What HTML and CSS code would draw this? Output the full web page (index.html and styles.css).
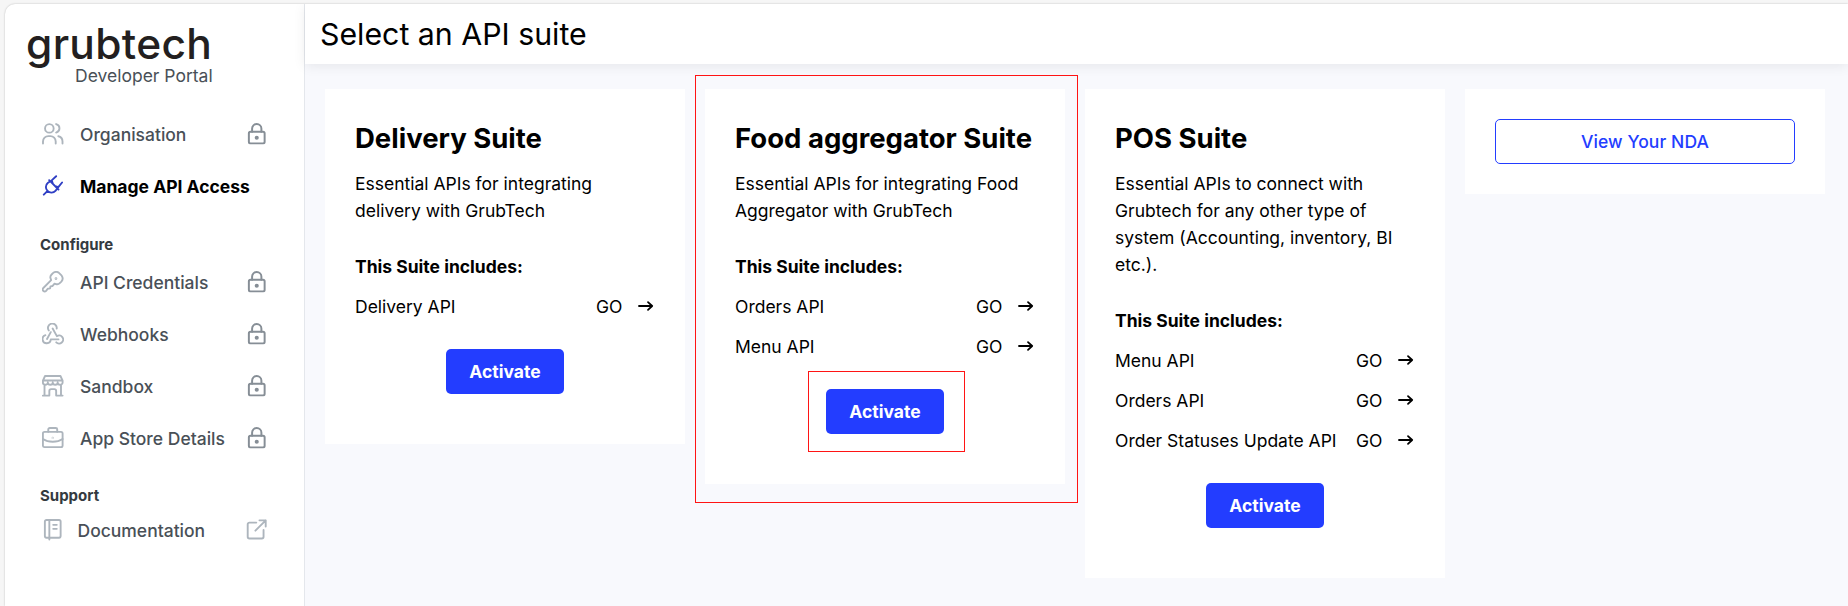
FILE: index.html
```html
<!DOCTYPE html>
<html lang="en">
<head>
  <meta charset="UTF-8" />
  <title>Grubtech Developer Portal</title>
  <link rel="stylesheet" href="styles.css">
</head>
<body>

  <!-- shared icons -->
  <svg class="sprite" xmlns="http://www.w3.org/2000/svg">
    <symbol id="lock" viewBox="0 0 24 24">
      <rect x="3.2" y="9.8" width="17.6" height="13" rx="1.8" />
      <path d="M6.8 9.8V6.300a5.2 5.2 0 0 1 10.4 0v3.5" />
      <circle cx="12" cy="16.4" r="1.2" />
    </symbol>
    <symbol id="arrow" viewBox="0 0 16 12">
      <path d="M1 6h13M10 2.200l4.200 3.800L10 9.800" />
    </symbol>
  </svg>

  <div class="frame">
    <aside class="sidebar">
      <div class="brand">
        <div class="logo">grubtech</div>
        <div class="brand-sub">Developer Portal</div>
      </div>

      <nav class="nav">
        <a class="nav-item">
          <svg class="icon" viewBox="0 0 24 24">
            <circle cx="8.200" cy="6" r="4.800" />
            <path d="M1.100 23v-2.400a6 6 0 0 1 6-6h2.200a6 6 0 0 1 6 6V23M15.800 1.200a4.900 4.900 0 0 1 0 9.500M18.200 14.800a6 6 0 0 1 4.700 5.800V23" />
          </svg>
          <span class="nav-label">Organisation</span>
          <svg class="icon lock"><use href="#lock" /></svg>
        </a>
        <a class="nav-item active">
          <svg class="icon" viewBox="0 0 24 24">
            <path d="M2 22l4.200-4.200M8 5.800l10.400 10.400M9.200 7L6.400 9a5.900 5.900 0 0 0-.2 8.800 5.900 5.900 0 0 0 8.800-.2l2.200-2.600M12 9.400L10.800 6l5-4.600M14.800 12.400l3.400 1.200 4.200-5.200" />
          </svg>
          <span class="nav-label">Manage API Access</span>
        </a>
      </nav>

      <h3 class="nav-title">Configure</h3>
      <nav class="nav">
        <a class="nav-item">
          <svg class="icon" viewBox="0 0 24 24">
            <path d="M12.200 2.400a5.600 5.600 0 0 1 6.400-.6l3.400 3.400a5.400 5.400 0 0 1-.4 6.600l-1.800 1.800a4 4 0 0 1-4.200 1l-1.600-.5-2.400 2.700-2.100.3-.5 2.300-2.600.4-1.800 2.400a2.200 2.200 0 0 1-3.100-3.200L10.200 10.200l-.6-1.800a4 4 0 0 1 .9-4.200z" />
            <circle cx="15.600" cy="8.400" r=".5" />
          </svg>
          <span class="nav-label">API Credentials</span>
          <svg class="icon lock"><use href="#lock" /></svg>
        </a>
        <a class="nav-item">
          <svg class="icon" viewBox="0 0 24 24">
            <path d="M7.600 8.400a4.900 4.900 0 1 1 8.800-2.100M11.900 6.200l4.700 8.500a4.500 4.500 0 1 1-.7 6.900M9.800 10.200l-4.200 7.600M3.800 13.600a4.600 4.600 0 1 0 6 4.700h8.600" />
          </svg>
          <span class="nav-label">Webhooks</span>
          <svg class="icon lock"><use href="#lock" /></svg>
        </a>
        <a class="nav-item">
          <svg class="icon" viewBox="0 0 24 24">
            <path d="M3.400 1.100h17.200L23 6.200H1zM1 6.200v2.200a2.750 2.500 0 0 0 5.500 0 2.750 2.500 0 0 0 5.500 0 2.750 2.500 0 0 0 5.500 0 2.750 2.500 0 0 0 5.500 0V6.200M2.800 11.400V23M21.200 11.400V23M1 23h7.200v-5.200a2 2 0 0 1 2-2h3.600a2 2 0 0 1 2 2V23H23" />
          </svg>
          <span class="nav-label">Sandbox</span>
          <svg class="icon lock"><use href="#lock" /></svg>
        </a>
        <a class="nav-item">
          <svg class="icon" viewBox="0 0 24 24">
            <rect x="1" y="5.400" width="22" height="17" rx="1.800" />
            <path d="M7 5.400V2.800a1.700 1.700 0 0 1 1.700-1.700h6.600A1.700 1.700 0 0 1 17 2.800v2.600M1 13.400c3 2 7 3 11 3s8-1 11-3" />
            <circle cx="12" cy="12.200" r=".2" />
          </svg>
          <span class="nav-label">App Store Details</span>
          <svg class="icon lock"><use href="#lock" /></svg>
        </a>
      </nav>

      <h3 class="nav-title support">Support</h3>
      <nav class="nav">
        <a class="nav-item docs">
          <svg class="icon" viewBox="0 0 24 24">
            <rect x="3.200" y="1.100" width="17.600" height="19.800" rx="1.800" />
            <path d="M8.200 1.100V23M12.500 6.500h4M12.500 11h4" />
          </svg>
          <span class="nav-label">Documentation</span>
          <svg class="icon external" viewBox="0 0 24 24">
            <path d="M11.500 4H3.800A1.900 1.900 0 0 0 1.900 5.900v13.900a1.900 1.900 0 0 0 1.900 1.900h13.900a1.900 1.900 0 0 0 1.900-1.900v-7.500M10.500 13L22 1.500M15 1.500h7v7" />
          </svg>
        </a>
      </nav>
    </aside>

    <main class="main">
      <header class="header">
        <h1>Select an API suite</h1>
      </header>

      <section class="cards">
        <div class="card">
          <h2>Delivery Suite</h2>
          <p class="desc">Essential APIs for integrating delivery with GrubTech</p>
          <h4>This Suite includes:</h4>
          <ul class="api-list">
            <li><span>Delivery API</span><a class="go">GO <svg class="arrow"><use href="#arrow" /></svg></a></li>
          </ul>
          <button class="btn">Activate</button>
        </div>

        <div class="card highlighted">
          <h2>Food aggregator Suite</h2>
          <p class="desc">Essential APIs for integrating Food Aggregator with GrubTech</p>
          <h4>This Suite includes:</h4>
          <ul class="api-list">
            <li><span>Orders API</span><a class="go">GO <svg class="arrow"><use href="#arrow" /></svg></a></li>
            <li><span>Menu API</span><a class="go">GO <svg class="arrow"><use href="#arrow" /></svg></a></li>
          </ul>
          <button class="btn marked">Activate</button>
        </div>

        <div class="card">
          <h2>POS Suite</h2>
          <p class="desc">Essential APIs to connect with Grubtech for any other type of system (Accounting, inventory, BI etc.).</p>
          <h4>This Suite includes:</h4>
          <ul class="api-list">
            <li><span>Menu API</span><a class="go">GO <svg class="arrow"><use href="#arrow" /></svg></a></li>
            <li><span>Orders API</span><a class="go">GO <svg class="arrow"><use href="#arrow" /></svg></a></li>
            <li><span>Order Statuses Update API</span><a class="go">GO <svg class="arrow"><use href="#arrow" /></svg></a></li>
          </ul>
          <button class="btn">Activate</button>
        </div>

        <div class="card nda">
          <button class="btn-outline">View Your NDA</button>
        </div>
      </section>
    </main>
  </div>

</body>
</html>
```
FILE: styles.css
```css
* {
  box-sizing: border-box;
  margin: 0;
  padding: 0;
}
body {
  font-family: Inter, "Liberation Sans", sans-serif;
  font-size: 17.5px;
  background: #f6f6f6;
  color: #000;
  height: 606px;
  padding: 4px 0 0 5px;
  overflow: hidden;
}
.sprite {
  display: none;
}
.frame {
  display: flex;
  height: 602px;
  background: #fff;
  border-top-left-radius: 10px;
  box-shadow: 0 0 2px rgba(0,0,0,0.25);
  overflow: hidden;
}

/* sidebar */
.sidebar {
  width: 300px;
  flex-shrink: 0;
  border-right: 1px solid #e4e7ec;
}
.brand {
  height: 104px;
  padding: 19px 0 0 21px;
}
.logo {
  font-size: 42.5px;
  font-weight: 500;
  line-height: 41px;
  letter-spacing: 0.3px;
  color: #231f20;
}
.brand-sub {
  padding-left: 49px;
  line-height: 24px;
  color: #495057;
}
.nav-item {
  display: flex;
  align-items: center;
  height: 52px;
  padding: 0 37px 0 37px;
  font-weight: 500;
  color: #495057;
}
.nav-item.active {
  color: #000;
  font-weight: 700;
}
.icon {
  width: 21.5px;
  height: 21.5px;
  flex-shrink: 0;
  margin-right: 16.5px;
  fill: none;
  stroke: #adb5bd;
  stroke-width: 2.1;
  stroke-linecap: round;
  stroke-linejoin: round;
}
.active .icon {
  stroke: #2f3fc4;
}
.nav-label {
  flex: 1;
  white-space: nowrap;
}
.icon.lock,
.icon.external {
  margin-right: 0;
}
.icon.lock {
  stroke: #868e96;
  stroke-width: 2.2;
}
.nav-title {
  padding: 23px 0 0 35px;
  height: 44px;
  line-height: 20px;
  font-size: 15px;
  font-weight: 700;
  color: #343a40;
}
.nav-title.support {
  padding-top: 22px;
  height: 40px;
}
.docs .icon {
  margin-right: 14px;
}
.docs .icon.external {
  margin-right: 0;
}

/* main area */
.main {
  flex: 1;
  background: #f8f9fd;
}
.header {
  height: 60px;
  padding-left: 15px;
  background: #fff;
  box-shadow: 0 2px 12px rgba(0,0,0,0.08);
}
.header h1 {
  font-size: 30.3px;
  font-weight: 400;
  line-height: 60px;
}
.cards {
  display: flex;
  align-items: flex-start;
  gap: 20px;
  padding: 25px 20px;
}
.card {
  width: 360px;
  flex-shrink: 0;
  padding: 30px 30px 50px;
  background: #fff;
}
.card h2 {
  font-size: 27.5px;
  font-weight: 700;
  line-height: 38px;
  white-space: nowrap;
}
.desc {
  margin-top: 13px;
  line-height: 27px;
}
.card h4 {
  margin-top: 29px;
  font-size: 17.5px;
  font-weight: 700;
  line-height: 28px;
}
.api-list {
  list-style: none;
  margin-top: 5px;
}
.api-list li {
  display: flex;
  justify-content: space-between;
  align-items: center;
  height: 40px;
}
.go {
  display: flex;
  align-items: center;
  gap: 15px;
}
.arrow {
  width: 16px;
  height: 12px;
  margin-right: 1.5px;
  fill: none;
  stroke: #000;
  stroke-width: 1.8;
  stroke-linecap: round;
  stroke-linejoin: round;
}
.btn {
  display: block;
  width: 118px;
  height: 45px;
  margin: 23px auto 0;
  border: none;
  border-radius: 5px;
  background: #233dff;
  color: #fff;
  font-family: inherit;
  font-size: 17.5px;
  font-weight: 700;
  cursor: pointer;
}
.btn-outline {
  display: block;
  width: 100%;
  height: 45px;
  border: 1px solid #233dff;
  border-radius: 5px;
  background: #fff;
  color: #233dff;
  font-family: inherit;
  font-size: 17.5px;
  font-weight: 500;
  letter-spacing: 0.1px;
  cursor: pointer;
}
.card.nda {
  padding-bottom: 30px;
}

/* red markers around the suite and its button */
.highlighted,
.marked {
  position: relative;
}
.highlighted::before,
.marked::before {
  content: "";
  position: absolute;
  border: 1px solid #ff1414;
  pointer-events: none;
}
.highlighted::before {
  top: -14px;
  right: -13px;
  bottom: -19px;
  left: -10px;
}
.marked::before {
  top: -18px;
  right: -21px;
  bottom: -18px;
  left: -18px;
}
```
